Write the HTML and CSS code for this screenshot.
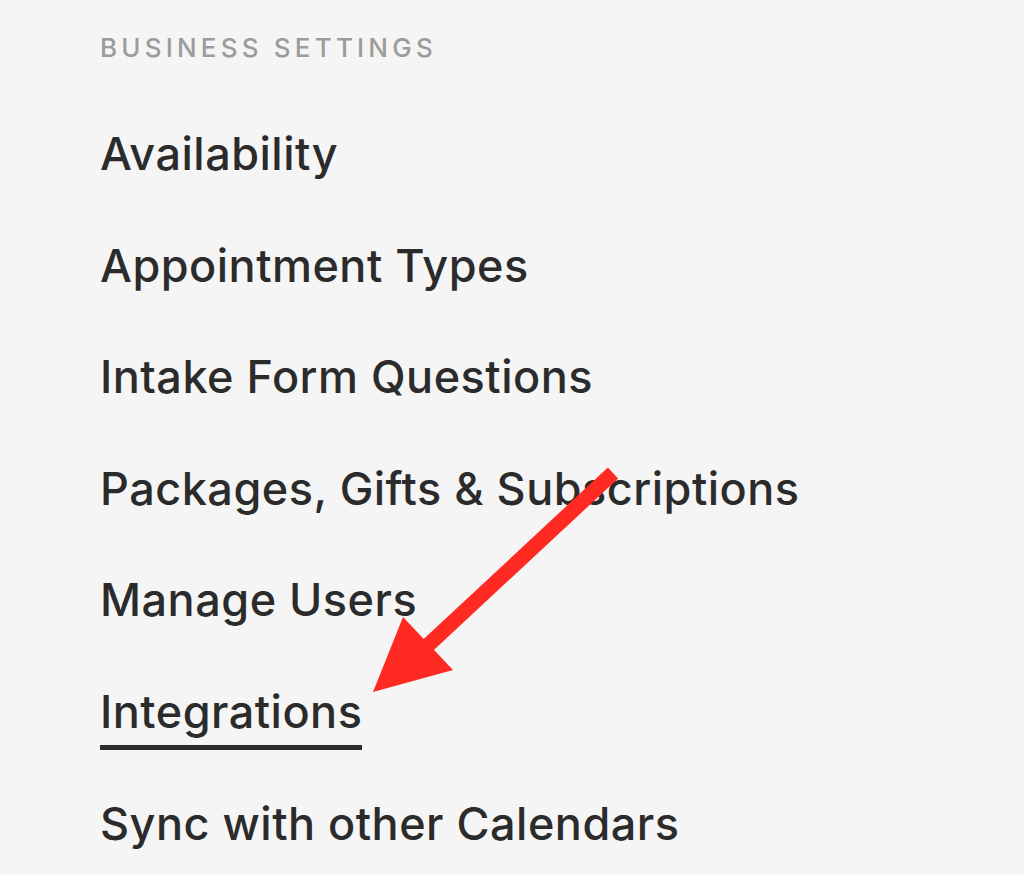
FILE: index.html
```html
<!DOCTYPE html>
<html lang="en">
<head>
  <meta charset="UTF-8">
  <title>Business Settings</title>
  <link rel="stylesheet" href="styles.css">
</head>
<body>
  <nav class="settings-menu">
    <h2 class="section-title">Business Settings</h2>
    <ul class="menu-list">
      <li><a href="#">Availability</a></li>
      <li><a href="#">Appointment Types</a></li>
      <li><a href="#">Intake Form Questions</a></li>
      <li><a href="#">Packages, Gifts &amp; Subscriptions</a></li>
      <li><a href="#">Manage Users</a></li>
      <li><a href="#" class="active">Integrations</a></li>
      <li><a href="#">Sync with other Calendars</a></li>
    </ul>
  </nav>

  <!-- flecha de anotacion -->
  <svg class="annotation" width="1024" height="875" viewBox="0 0 1024 875">
    <line x1="613" y1="473" x2="425" y2="648" stroke="#ff2a22" stroke-width="15" stroke-linecap="butt"/>
    <polygon points="373,692 403,617 453,670" fill="#ff2a22"/>
  </svg>
</body>
</html>
```

FILE: styles.css
```css
body {
  margin: 0;
  background-color: #f5f5f5;
  font-family: "Inter", "Liberation Sans", Arial, sans-serif;
  color: #2b2b2b;
  height: 875px;
  overflow: hidden;
  position: relative;
}

.settings-menu {
  padding: 33px 0 0 100px;
}

.section-title {
  margin: 0;
  font-size: 26px;
  font-weight: 500;
  letter-spacing: 4.2px;
  text-transform: uppercase;
  color: #9c9c9c;
  line-height: 30px;
}

.menu-list {
  list-style: none;
  margin: 63px 0 0;
  padding: 0;
  display: flex;
  flex-direction: column;
  gap: 55.6px;
}

.menu-list a {
  display: inline-block;
  color: #2b2b2b;
  text-decoration: none;
  font-size: 45px;
  font-weight: 500;
  line-height: 56px;
  letter-spacing: 0.5px;
}

.menu-list a.active {
  padding-bottom: 5px;
  border-bottom: 5px solid #2b2b2b;
  margin-bottom: -10px;
}

.annotation {
  position: absolute;
  left: 0;
  top: 0;
  pointer-events: none;
}
```
